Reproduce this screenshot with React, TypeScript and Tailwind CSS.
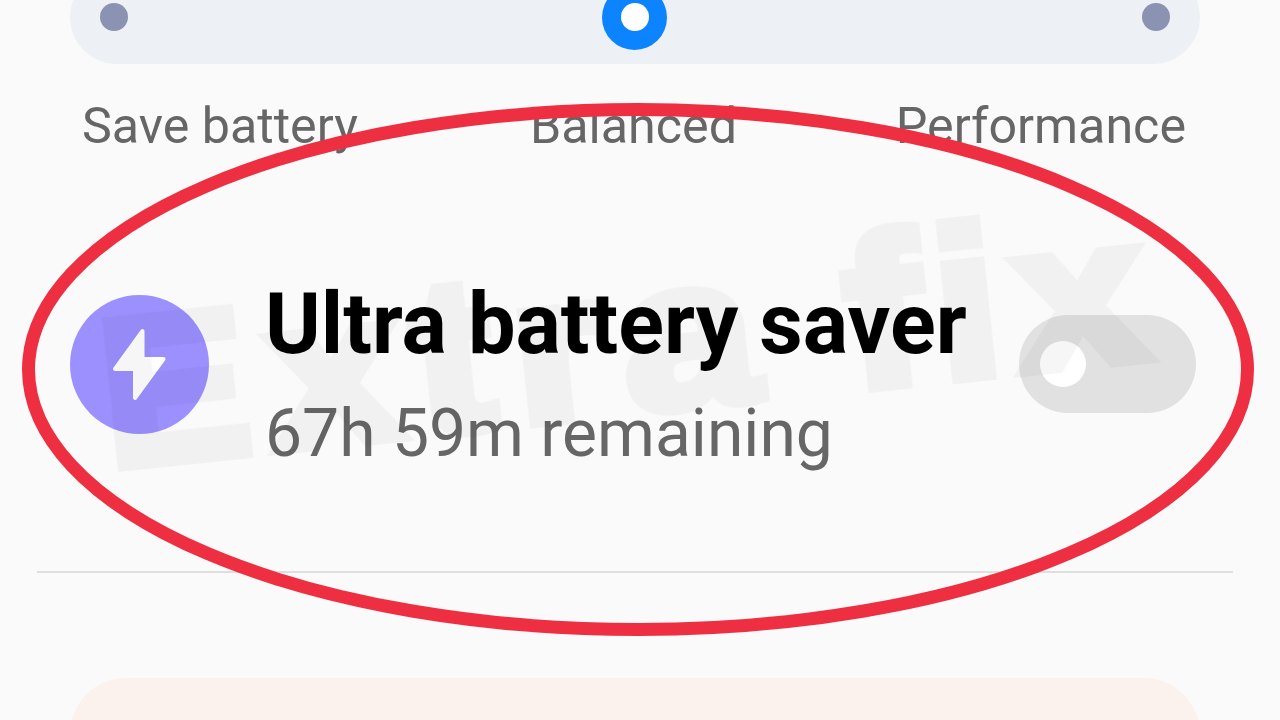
import React from "react";

const modes = ["Save battery", "Balanced", "Performance"];

// x is the offset along the baseline, sx / sy stretch the letter
const watermark = [
  { char: "E", x: -8, sx: 1.06, sy: 1 },
  { char: "x", x: 161, sx: 1.1, sy: 1.01 },
  { char: "t", x: 306, sx: 1.12, sy: 1.05 },
  { char: "r", x: 405, sx: 1.12, sy: 1 },
  { char: "a", x: 515, sx: 1.15, sy: 1.01 },
  { char: "f", x: 740, sx: 1.1, sy: 1.03 },
  { char: "i", x: 830, sx: 1.1, sy: 1.02 },
  { char: "x", x: 911, sx: 1.1, sy: 1.0 },
];

const ModeSlider: React.FC = () => (
  <div className="-mt-[30px] ml-[70px] flex h-[94px] w-[1130px] shrink-0 items-center justify-between rounded-full bg-[#edf1f6] pl-[29.5px] pr-[30.5px]">
    <span className="h-7 w-7 rounded-full bg-[#8c92b2]" />
    <span className="flex h-[65px] w-[65px] items-center justify-center rounded-full bg-[#0d84ff]">
      <span className="h-7 w-7 rounded-full bg-white" />
    </span>
    <span className="h-7 w-7 rounded-full bg-[#8c92b2]" />
  </div>
);

const ModeLabels: React.FC = () => (
  <div className="mt-[32px] ml-[82px] grid h-[60px] w-[1104px] shrink-0 grid-cols-[448px_1fr_auto] items-center text-[50.2px] leading-[60px] text-[#666666]">
    {modes.map((mode) => (
      <span key={mode} className="whitespace-nowrap">
        {mode}
      </span>
    ))}
  </div>
);

const BoltIcon: React.FC = () => (
  <svg viewBox="0 0 139 139" className="h-[139px] w-[139px]">
    <path
      d="M72.5 36 V64 H93.5 L65 103 V74 H45 Z"
      fill="#ffffff"
      stroke="#ffffff"
      strokeWidth="4"
      strokeLinejoin="round"
    />
  </svg>
);

const Toggle: React.FC = () => (
  <div className="mb-[2px] flex h-[98px] w-[177px] shrink-0 items-center rounded-full bg-[#e1e1e1] pl-[21px]">
    <span className="h-[46px] w-[46px] rounded-full bg-white" />
  </div>
);

const UltraSaverRow: React.FC = () => (
  <div className="mt-[97px] ml-[70px] flex h-[223px] w-[1126px] shrink-0 items-center">
    <div className="h-[139px] w-[139px] shrink-0 rounded-full bg-[#9c90ff]">
      <BoltIcon />
    </div>
    <div className="ml-[56px] flex w-[740px] shrink-0 flex-col pt-[19px]">
      <span className="whitespace-nowrap text-[84.7px] font-bold leading-[100px] text-black">
        Ultra battery saver
      </span>
      <span className="mt-[20px] whitespace-nowrap text-[66px] leading-[80px] text-[#666666]">
        67h 59m remaining
      </span>
    </div>
    <div className="ml-auto">
      <Toggle />
    </div>
  </div>
);

// Watermark and marker ring, drawn over the settings page
const Overlay: React.FC = () => (
  <svg
    viewBox="0 0 1280 720"
    className="pointer-events-none absolute inset-0 h-[720px] w-[1280px]"
  >
    <g
      transform="translate(118 472) rotate(-6)"
      opacity="0.038"
      fontFamily="Liberation Sans, sans-serif"
      fontWeight="700"
      fontSize="207"
      fill="#000000"
      stroke="#000000"
      strokeWidth="12"
    >
      {watermark.map((item, i) => (
        <text
          key={i}
          y="-6"
          transform={`translate(${item.x} 0) scale(${item.sx} ${item.sy})`}
        >
          {item.char}
        </text>
      ))}
    </g>
    <ellipse
      cx="638"
      cy="369.5"
      rx="609.5"
      ry="260"
      fill="none"
      stroke="#ee2e41"
      strokeWidth="13"
    />
  </svg>
);

const App: React.FC = () => {
  return (
    <div className="relative flex h-[720px] w-[1280px] flex-col overflow-hidden bg-[#fafafa] font-['Roboto',sans-serif]">
      <ModeSlider />
      <ModeLabels />
      <UltraSaverRow />
      <div className="mt-[95px] ml-[37px] h-[2px] w-[1196px] shrink-0 bg-[#dfdfdf]" />
      <div className="mt-[105px] ml-[70px] h-[120px] w-[1130px] shrink-0 rounded-[56px] bg-[#fbf2ee]" />
      <Overlay />
    </div>
  );
};

export default App;
